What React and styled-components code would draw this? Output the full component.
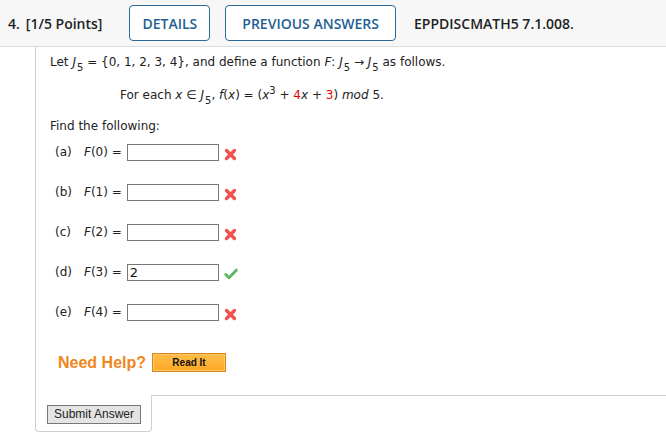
import styled, { createGlobalStyle } from "styled-components";

const Global = createGlobalStyle`
  html, body {
    margin: 0;
    padding: 0;
    background: #fff;
  }
`;

const Header = styled.header`
  display: flex;
  align-items: center;
  height: 46px;
  padding-left: 8px;
  background: #f7f7f7;
  border-bottom: 1px solid #dcdcdc;
  font-family: "Open Sans", sans-serif;
  font-size: 14px;
  font-weight: 600;
  color: #222;
`;

const Number = styled.span`
  margin-right: 6px;
`;

const Points = styled.span`
  margin-right: 27px;
`;

const OutlineButton = styled.button`
  height: 36px;
  margin-right: ${(p) => p.$gap || 0}px;
  padding: 0 ${(p) => p.$pad || 14}px;
  background: #fff;
  border: 1px solid #2a6a9a;
  border-radius: 4px;
  font-family: "Open Sans", sans-serif;
  font-size: 14px;
  font-weight: 600;
  color: #1f5f93;
  text-transform: uppercase;
`;

const Code = styled.span`
  margin-left: 18px;
`;

const Body = styled.section`
  position: relative;
  margin-left: 35px;
  border-left: 1px solid #d0d0d0;
  border-bottom: 1px solid #d0d0d0;
  padding: 7px 0 23px 14px;
  font-family: "DejaVu Sans", Verdana, sans-serif;
  font-size: 12px;
  color: #222;
`;

const Line = styled.p`
  margin: 0;
  padding-left: ${(p) => p.$indent || 0}px;
  line-height: 16px;
  margin-top: ${(p) => p.$top || 0}px;
`;

const I = styled.i``;

const Sub = styled.sub`
  font-size: 10px;
  vertical-align: -5px;
  line-height: 0;
  margin-left: 1px;
`;

const Sup = styled.sup`
  font-size: 10px;
  vertical-align: 5px;
  line-height: 0;
`;

const Red = styled.span`
  color: #e00000;
`;

const Rows = styled.div`
  display: flex;
  flex-direction: column;
  gap: 22px;
  margin-top: 9px;
  padding-left: 5px;
`;

const Row = styled.div`
  display: flex;
  align-items: center;
  height: 18px;
`;

const Tag = styled.span`
  width: 29px;
`;

const Fn = styled.span`
  margin-right: 5px;
`;

const Field = styled.div`
  box-sizing: border-box;
  width: 92px;
  height: 17px;
  border: 1px solid #777;
  padding-left: 2px;
  font-size: 13px;
  line-height: 15px;
  color: #111;
`;

const Mark = styled.svg`
  margin-left: 5px;
  margin-top: 4px;
`;

const Help = styled.div`
  display: flex;
  align-items: center;
  gap: 6px;
  margin-top: 32px;
  padding-left: 8px;
`;

const HelpText = styled.span`
  font-family: "Liberation Sans", Arial, sans-serif;
  font-size: 16px;
  font-weight: bold;
  color: #f0861c;
`;

const ReadIt = styled.button`
  width: 74px;
  height: 19px;
  padding: 0;
  background: linear-gradient(#ffbd4a, #ffa824);
  border: 1px solid #d9841f;
  box-shadow: inset 0 0 0 1px #ffc766;
  font-family: "Liberation Sans", Arial, sans-serif;
  font-size: 10px;
  font-weight: bold;
  color: #111;
`;

const Tab = styled.div`
  position: relative;
  z-index: 1;
  box-sizing: border-box;
  width: 117px;
  height: 37px;
  margin-left: 35px;
  margin-top: -1px;
  padding: 9px 0 0 11px;
  background: #fff;
  border: 1px solid #d0d0d0;
  border-top: none;
  border-radius: 0 0 4px 4px;
`;

const Submit = styled.button`
  height: 19px;
  padding: 0 6px;
  background: #e4e4e4;
  border: 1px solid #777;
  font-family: "Liberation Sans", Arial, sans-serif;
  font-size: 12px;
  color: #222;
`;

function Cross() {
  return (
    <Mark width="13" height="13" viewBox="0 0 13 13">
      <path
        d="M2.5 2.5 L10.5 10.5 M10.5 2.5 L2.5 10.5"
        stroke="#f05252"
        strokeWidth="3.4"
        strokeLinecap="round"
      />
    </Mark>
  );
}

function Check() {
  return (
    <Mark width="14" height="12" viewBox="0 0 14 12">
      <path
        d="M1.8 6.5 L5 9.7 L12.3 2.2"
        fill="none"
        stroke="#62b862"
        strokeWidth="3"
        strokeLinecap="round"
        strokeLinejoin="round"
      />
    </Mark>
  );
}

const answers = [
  { tag: "a", arg: 0, value: "", ok: false },
  { tag: "b", arg: 1, value: "", ok: false },
  { tag: "c", arg: 2, value: "", ok: false },
  { tag: "d", arg: 3, value: "2", ok: true },
  { tag: "e", arg: 4, value: "", ok: false },
];

function App() {
  return (
    <>
      <Global />
      <Header>
        <Number>4.</Number>
        <Points>[1/5 Points]</Points>
        <OutlineButton $gap={15} $pad={12}>
          Details
        </OutlineButton>
        <OutlineButton $pad={16}>Previous Answers</OutlineButton>
        <Code>EPPDISCMATH5 7.1.008.</Code>
      </Header>
      <Body>
        <Line>
          Let <I>J</I>
          <Sub>5</Sub> = {"{"}0, 1, 2, 3, 4{"}"}, and define a function <I>F</I>: <I>J</I>
          <Sub>5</Sub> → <I>J</I>
          <Sub>5</Sub> as follows.
        </Line>
        <Line $indent={70} $top={17}>
          For each <I>x</I> ∈ <I>J</I>
          <Sub>5</Sub>, <I>f</I>(<I>x</I>) = (<I>x</I>
          <Sup>3</Sup> + <Red>4</Red>
          <I>x</I> + <Red>3</Red>) <I>mod</I> 5.
        </Line>
        <Line $top={15}>Find the following:</Line>
        <Rows>
          {answers.map((a) => (
            <Row key={a.tag}>
              <Tag>({a.tag})</Tag>
              <Fn>
                <I>F</I>({a.arg}) =
              </Fn>
              <Field>{a.value}</Field>
              {a.ok ? <Check /> : <Cross />}
            </Row>
          ))}
        </Rows>
        <Help>
          <HelpText>Need Help?</HelpText>
          <ReadIt>Read It</ReadIt>
        </Help>
      </Body>
      <Tab>
        <Submit>Submit Answer</Submit>
      </Tab>
    </>
  );
}

export default App;
